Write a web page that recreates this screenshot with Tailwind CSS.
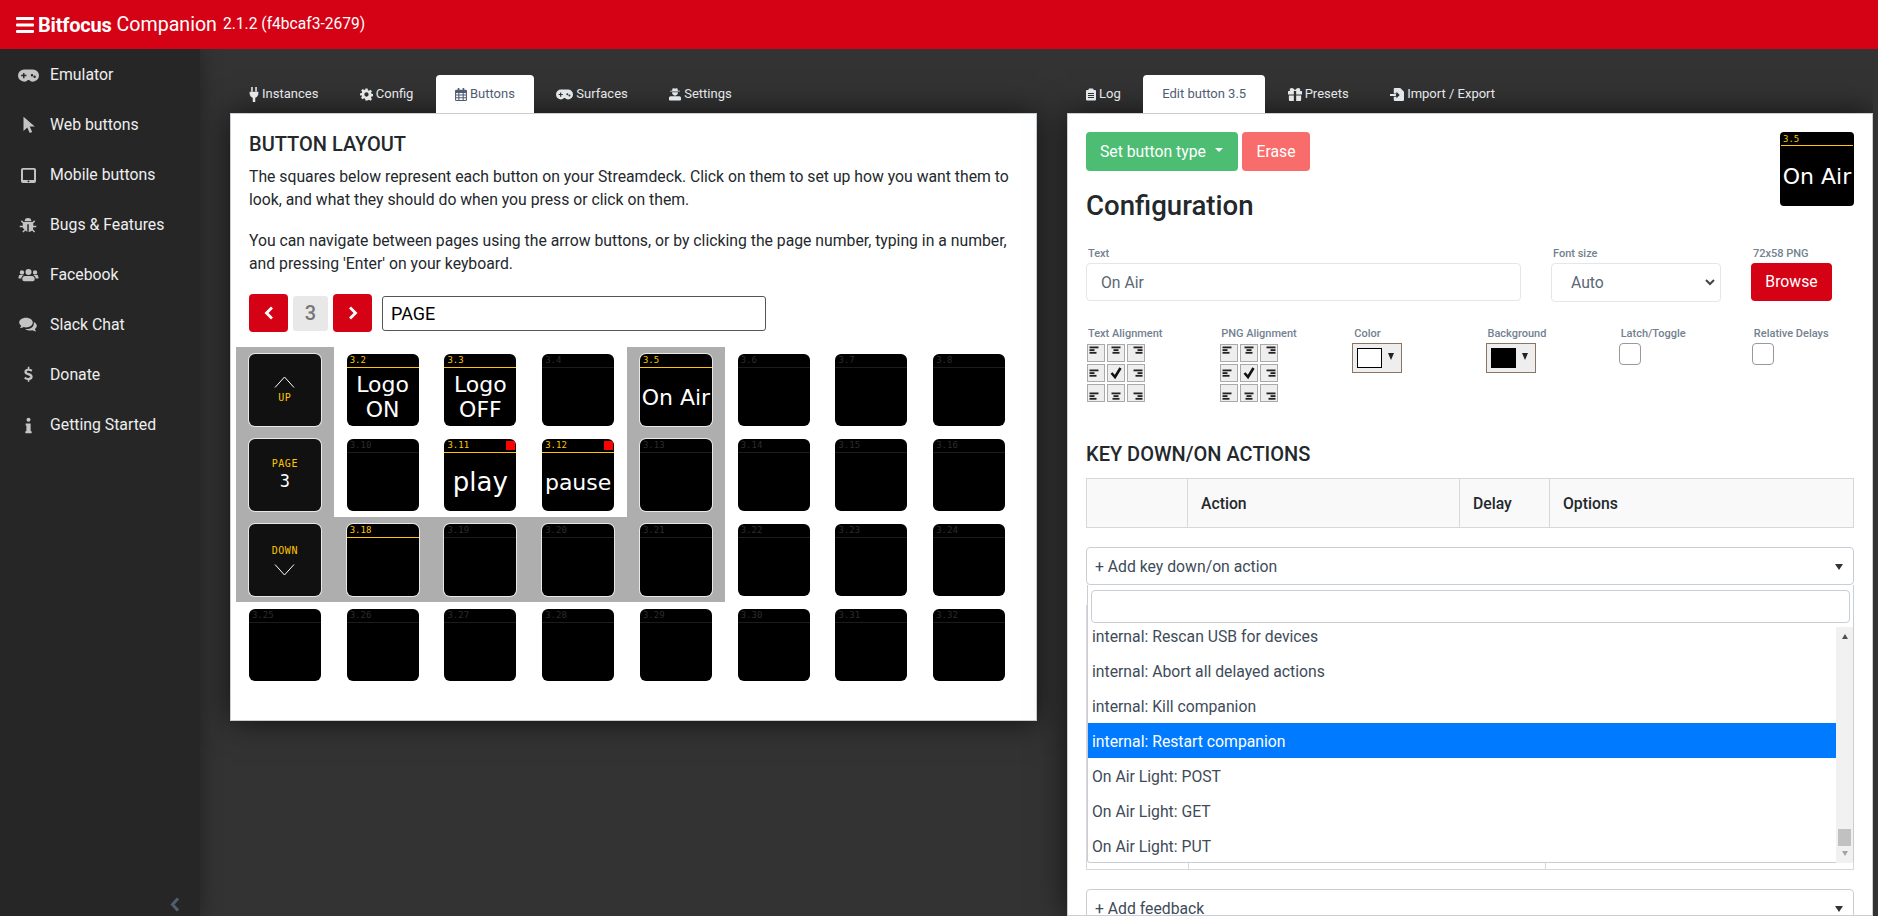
<!DOCTYPE html>
<html lang="en">

<head>
    <meta charset="UTF-8">
    <meta name="viewport" content="width=device-width, initial-scale=1.0">
    <title>Bitfocus Companion</title>
    <script src="https://cdn.jsdelivr.net/npm/@tailwindcss/browser@4"></script>
</head>

<body class="bg-[#333333] font-['Roboto',sans-serif] text-[#23282c] overflow-hidden">

    <!-- icon set -->
    <svg class="hidden">
        <symbol id="i-gamepad" viewBox="0 1 24 14"><path fill="currentColor" fill-rule="evenodd" d="M7 1h10a7 7 0 0 1 0 14c-2 0-3.2-1-4.2-2h-1.600c-1 1-2.200 2-4.200 2A7 7 0 0 1 7 1zM5.800 5v2.200H3.600v1.600h2.200V11h1.600V8.800h2.200V7.200H7.400V5zM16 6.200a1.400 1.400 0 1 0 0 2.800 1.400 1.400 0 0 0 0-2.800zM19 8a1.400 1.400 0 1 0 0 2.800A1.400 1.400 0 0 0 19 8z"/></symbol>
        <symbol id="i-pointer" viewBox="0 0 24 24"><path fill="currentColor" d="M6 1v19l5-4.600 3.300 7.400 3.300-1.500-3.300-7.200h6.700z"/></symbol>
        <symbol id="i-tablet" viewBox="2.5 1 19 22" preserveAspectRatio="none"><path fill="currentColor" fill-rule="evenodd" d="M5 1h14a2.500 2.500 0 0 1 2.500 2.500v17A2.500 2.500 0 0 1 19 23H5a2.500 2.500 0 0 1-2.500-2.500v-17A2.500 2.500 0 0 1 5 1zM5 3.500V18.500h14V3.500zM12 19.300a1.300 1.300 0 1 0 0 2.600 1.300 1.300 0 0 0 0-2.600z"/></symbol>
        <symbol id="i-bug" viewBox="0 0 24 24"><path fill="currentColor" fill-rule="evenodd" d="M7.500 7a4.500 4.500 0 0 1 9 0zM6 8h12l2.200-2.200 1.400 1.400L19 9.800V13h4v2h-4c0 1-.2 1.800-.5 2.500l3 3-1.400 1.400-2.700-2.700c-1 1.200-2.400 1.800-4.400 1.800s-3.400-.6-4.400-1.800l-2.700 2.700-1.400-1.400 3-3C5.200 16.800 5 16 5 15H1v-2h4V9.800L2.400 7.200l1.400-1.400zm5 3v9.800h2V11z"/></symbol>
        <symbol id="i-users" viewBox="0 0 24 18"><path fill="currentColor" d="M12 2a3.500 3.500 0 1 1 0 7 3.500 3.500 0 0 1 0-7zM4.500 3.500a2.500 2.500 0 1 1 0 5 2.500 2.500 0 0 1 0-5zM19.500 3.500a2.500 2.500 0 1 1 0 5 2.500 2.500 0 0 1 0-5zM8 10h8c1.600 0 3 1.200 3 3v1.500c0 1-1 1.500-2 1.500H7c-1 0-2-.5-2-1.500V13c0-1.800 1.400-3 3-3zM1 10c0-.6.600-1 1.200-1h3.300c.4 0 .6.200.8.400C5 10 3.800 11.400 3.800 13H1.500C1 13 .5 12.600.5 12zM23.500 12c0 .6-.5 1-1 1h-2.300c0-1.600-1.200-3-2.500-3.600.2-.2.400-.4.800-.4h3.300c.6 0 1.200.4 1.200 1z"/></symbol>
        <symbol id="i-comments" viewBox="0 0 24 20"><path fill="currentColor" d="M9.500 1C14.500 1 18 3.700 18 7s-3.500 6-8.500 6c-1 0-2-.1-2.900-.4C5.200 13.600 3.500 14 1.800 14c.8-.8 1.500-1.800 1.700-3C2 9.800 1 8.500 1 7c0-3.300 3.500-6 8.500-6z"/><path fill="currentColor" d="M19.300 6.200C21.600 7.300 23 9 23 11c0 1.500-.9 2.800-2.400 3.900.2 1.200.9 2.300 1.700 3.100-1.800 0-3.400-.5-4.900-1.400-.9.300-1.900.4-2.900.4-2.500 0-4.600-.7-6-1.900 6 .5 11.500-2.400 10.800-8.900z"/></symbol>
        <symbol id="i-info" viewBox="0 0 12 24"><path fill="currentColor" d="M6 1a2.800 2.800 0 1 1 0 5.600A2.800 2.800 0 0 1 6 1zM2 9h7v11h1.500v3h-9v-3H3v-8H2z"/></symbol>
        <symbol id="i-dollar" viewBox="0 0 14 24"><path fill="currentColor" d="M6 1h2.200v2.600c1.600.2 3 .8 4 1.500l-1.300 2.400c-1.200-.8-2.700-1.300-4-1.300-1.400 0-2.200.5-2.200 1.300 0 2.200 7.900 1.300 7.900 6.700 0 2.300-1.700 4-4.400 4.400V21H6v-2.400c-2-.2-3.600-1-4.800-2l1.400-2.300c1.300 1 2.800 1.700 4.300 1.700 1.500 0 2.500-.6 2.500-1.600 0-2.400-7.900-1.500-7.900-6.700 0-2.200 1.700-3.800 4.500-4.100z"/></symbol>
        <symbol id="i-plug" viewBox="0 0 16 24"><path fill="currentColor" d="M3.500 0h2.500v7H3.500zM10 0h2.500v7H10zM1 7.500h14v3c0 3.500-2.500 6-5 6.700V24H6v-6.800c-2.500-.7-5-3.200-5-6.700z"/></symbol>
        <symbol id="i-cog" viewBox="0 0 24 24"><path fill="currentColor" fill-rule="evenodd" d="M10 1h4l.6 3.200 2 .8 2.700-1.800 2.800 2.800-1.800 2.700.8 2 3.200.6v4l-3.200.6-.8 2 1.800 2.700-2.800 2.800-2.700-1.800-2 .8L14 23h-4l-.6-3.200-2-.8-2.700 1.800-2.800-2.800 1.800-2.700-.8-2L0 14v-4l3.200-.6.8-2-1.800-2.700 2.800-2.800 2.700 1.800 2-.8zM12 8a4 4 0 1 0 0 8 4 4 0 0 0 0-8z"/></symbol>
        <symbol id="i-calendar" viewBox="0 0 22 24"><path fill="currentColor" fill-rule="evenodd" d="M5 0h3v3h6V0h3v3h3a2 2 0 0 1 2 2v17a2 2 0 0 1-2 2H2a2 2 0 0 1-2-2V5a2 2 0 0 1 2-2h3zM2 9v3h4V9zm6 0v3h6V9zm8 0v3h4V9zM2 14v3h4v-3zm6 0v3h6v-3zm8 0v3h4v-3zM2 19v3h4v-3zm6 0v3h6v-3zm8 0v3h4v-3z"/></symbol>
        <symbol id="i-secret" viewBox="0 0 22 24"><path fill="currentColor" fill-rule="evenodd" d="M7 1c1.400.6 2.600 1 4 1s2.600-.4 4-1l1.500 5H20v1.500H2V6h3.500zM5.500 9h11c0 3-2 6-5.500 6S5.500 12 5.500 9zM3 16h16c1.700 0 3 1.300 3 3v3c0 1-1 2-2 2H2c-1 0-2-1-2-2v-3c0-1.700 1.300-3 3-3z"/></symbol>
        <symbol id="i-clipboard" viewBox="0 0 20 24"><path fill="currentColor" fill-rule="evenodd" d="M7 0h6a2 2 0 0 1 2 2v1h3a2 2 0 0 1 2 2v17a2 2 0 0 1-2 2H2a2 2 0 0 1-2-2V5a2 2 0 0 1 2-2h3V2a2 2 0 0 1 2-2zM4 9v1.800h12V9zm0 4v1.800h12V13zm0 4v1.800h12V17z"/></symbol>
        <symbol id="i-gift" viewBox="0 0 24 22"><path fill="currentColor" d="M6.500 0C8.500 0 11 2 12 4c1-2 3.500-4 5.500-4C20 0 21 1.500 21 3c0 .8-.2 1.400-.6 2H23a1 1 0 0 1 1 1v5H14V5h-4v6H0V6a1 1 0 0 1 1-1h2.600C3.200 4.400 3 3.800 3 3c0-1.500 1-3 3.500-3zM1.500 12.500H10V22H3a1.500 1.500 0 0 1-1.500-1.500zM14 12.500h8.500v8A1.500 1.500 0 0 1 21 22h-7z"/></symbol>
        <symbol id="i-import" viewBox="0 0 26 24"><path fill="currentColor" fill-rule="evenodd" d="M9 0h10l7 7v15a2 2 0 0 1-2 2H9a2 2 0 0 1-2-2v-6h5v3l6-6-6-6v3H7V2a2 2 0 0 1 2-2zM0 11h11v4H0z"/></symbol>
    </svg>

    <header class="flex items-center h-[49px] bg-[#d50215] text-white pl-[16px] relative z-20">
        <svg class="w-[18px] h-[16px] mr-[4px]" viewBox="0 0 18 16" fill="#fff"><rect y="0" width="18" height="3" rx="1"/><rect y="6.500" width="18" height="3" rx="1"/><rect y="13" width="18" height="3" rx="1"/></svg>
        <span class="text-[20px] font-bold tracking-[-0.2px]">Bitfocus</span>
        <span class="text-[19.6px] ml-[5px]">Companion</span>
        <span class="text-[15.6px] ml-[6px]">2.1.2 (f4bcaf3-2679)</span>
    </header>

    <div class="flex h-[867px]">
        <aside class="relative z-10 flex flex-col w-[200px] shrink-0 bg-[#262626] shadow-[0_0_20px_rgba(0,0,0,0.35)] pt-[1px] text-[15.8px] text-[#eeeeee]">
            <a class="flex items-center h-[50px]"><span class="flex justify-center w-[50px] pl-[6px] text-[#c4c4c4]"><svg class="w-[21px] h-[13px]"><use href="#i-gamepad"/></svg></span>Emulator</a>
            <a class="flex items-center h-[50px]"><span class="flex justify-center w-[50px] pl-[6px] text-[#c4c4c4]"><svg class="w-[18px] h-[18px]"><use href="#i-pointer"/></svg></span>Web buttons</a>
            <a class="flex items-center h-[50px]"><span class="flex justify-center w-[50px] pl-[6px] text-[#c4c4c4]"><svg class="w-[15px] h-[15px]"><use href="#i-tablet"/></svg></span>Mobile buttons</a>
            <a class="flex items-center h-[50px]"><span class="flex justify-center w-[50px] pl-[6px] text-[#c4c4c4]"><svg class="w-[18px] h-[18px]"><use href="#i-bug"/></svg></span>Bugs &amp; Features</a>
            <a class="flex items-center h-[50px]"><span class="flex justify-center w-[50px] pl-[6px] text-[#c4c4c4]"><svg class="w-[21px] h-[16px]"><use href="#i-users"/></svg></span>Facebook</a>
            <a class="flex items-center h-[50px]"><span class="flex justify-center w-[50px] pl-[6px] text-[#c4c4c4]"><svg class="w-[20px] h-[16px]"><use href="#i-comments"/></svg></span>Slack Chat</a>
            <a class="flex items-center h-[50px]"><span class="flex justify-center w-[50px] pl-[6px] text-[#c4c4c4]"><svg class="w-[11px] h-[18px]"><use href="#i-dollar"/></svg></span>Donate</a>
            <a class="flex items-center h-[50px]"><span class="flex justify-center w-[50px] pl-[6px] text-[#c4c4c4]"><svg class="w-[9px] h-[17px]"><use href="#i-info"/></svg></span>Getting Started</a>
            <div class="mt-auto flex justify-end pr-[20px] pb-[4px]">
                <svg class="w-[10px] h-[15px]" viewBox="0 0 10 15" fill="none" stroke="#4f5f70" stroke-width="3"><path d="M8 1.500 2.500 7.500 8 13.500"/></svg>
            </div>
        </aside>

        <main class="flex gap-[30px] pl-[30px] pt-[26px] overflow-hidden">

            <!-- left column -->
            <section class="w-[807px] shrink-0">
                <nav class="relative z-10 flex gap-[3.5px] h-[38px] text-[13px] text-[#e4e7ea]">
                    <a class="flex items-center px-[19px]"><svg class="w-[10px] h-[15px] mr-[3px]"><use href="#i-plug"/></svg>Instances</a>
                    <a class="flex items-center px-[19px]"><svg class="w-[13px] h-[13px] mr-[3px]"><use href="#i-cog"/></svg>Config</a>
                    <a class="flex items-center px-[19px] bg-white rounded-t-[4px] text-[#4f5d73]"><svg class="w-[12px] h-[13px] mr-[3px]"><use href="#i-calendar"/></svg>Buttons</a>
                    <a class="flex items-center px-[19px]"><svg class="w-[17px] h-[11px] mr-[3px]"><use href="#i-gamepad"/></svg>Surfaces</a>
                    <a class="flex items-center px-[19px]"><svg class="w-[12px] h-[14px] mr-[3px]"><use href="#i-secret"/></svg>Settings</a>
                </nav>
                <div class="h-[608px] bg-white border border-[#c8ced3] px-[18px] pt-[20px] shadow-[0_0_30px_rgba(0,0,0,0.65)]">
                    <h5 class="text-[20px] leading-[21px] font-medium">BUTTON LAYOUT</h5>
                    <p class="mt-[10px] text-[15.75px] leading-[23px]">The squares below represent each button on your Streamdeck. Click on them to set up how you want them to look, and what they should do when you press or click on them.</p>
                    <p class="mt-[18px] text-[15.75px] leading-[23px]">You can navigate between pages using the arrow buttons, or by clicking the page number, typing in a number, and pressing 'Enter' on your keyboard.</p>
                    <div class="flex items-center mt-[19px] h-[38px]">
                        <button class="flex items-center justify-center w-[39px] h-[38px] rounded-[4px] bg-[#d50215]"><svg class="w-[10px] h-[14px]" viewBox="0 0 10 14" fill="none" stroke="#fff" stroke-width="2.800"><path d="M8 1.500 2.500 7 8 12.500"/></svg></button>
                        <div class="flex items-center justify-center w-[35px] h-[35px] ml-[5px] rounded-[3px] bg-[#e8e8e8] text-[20px] font-medium text-[#777777]">3</div>
                        <button class="flex items-center justify-center w-[39px] h-[38px] ml-[5px] rounded-[4px] bg-[#d50215]"><svg class="w-[10px] h-[14px]" viewBox="0 0 10 14" fill="none" stroke="#fff" stroke-width="2.800"><path d="M2 1.500 7.500 7 2 12.500"/></svg></button>
                        <input class="w-[384px] h-[35px] ml-[10px] px-[8px] rounded-[3px] border border-[#555555] text-[18px] text-black" value="PAGE">
                    </div>
                    <div id="button-grid" class="grid grid-cols-8 w-[782px] mt-[15px] ml-[-13px]"></div>
                </div>
            </section>

            <!-- right column -->
            <section class="w-[806px] shrink-0">
                <nav class="relative z-10 flex gap-[3.5px] h-[38px] text-[13px] text-[#e4e7ea]">
                    <a class="flex items-center px-[19px]"><svg class="w-[10px] h-[13px] mr-[3px]"><use href="#i-clipboard"/></svg>Log</a>
                    <a class="flex items-center px-[19px] bg-white rounded-t-[4px] text-[#4f5d73]">Edit button 3.5</a>
                    <a class="flex items-center px-[19px]"><svg class="w-[14px] h-[13px] mr-[3px]"><use href="#i-gift"/></svg>Presets</a>
                    <a class="flex items-center px-[19px]"><svg class="w-[14px] h-[13px] mr-[3px]"><use href="#i-import"/></svg>Import / Export</a>
                </nav>
                <div class="h-[803px] bg-white border border-[#c8ced3] px-[18px] pt-[18px] shadow-[0_0_30px_rgba(0,0,0,0.65)]">
                    <div class="flex justify-between">
                        <div>
                            <div class="flex gap-[4px] text-[15.75px] text-white">
                                <button class="flex items-center h-[39px] w-[152px] pl-[14px] rounded-[4px] bg-[#4dbd74]">Set button type<span class="ml-[9px] mb-[3px] border-x-[4px] border-t-[4px] border-x-transparent border-t-white"></span></button>
                                <button class="h-[39px] w-[68px] rounded-[4px] bg-[#f86c6b]">Erase</button>
                            </div>
                            <h3 class="mt-[19px] mb-[-1px] text-[27.6px] leading-[32px] font-medium">Configuration</h3>
                        </div>
                        <div id="preview" class="flex flex-col w-[74px] h-[74px] rounded-[4px] bg-black text-white px-[1px] overflow-hidden">
                            <div class="h-[14px] pt-[1px] pl-[2px] border-b border-[#ffc600] font-['DejaVu_Sans_Mono',monospace] text-[9px] leading-[12px] text-[#ffc600]">3.5</div>
                            <div class="flex-1 flex items-center justify-center font-['DejaVu_Sans',sans-serif] text-[22px]">On Air</div>
                        </div>
                    </div>

                    <div class="flex gap-[30px] mt-[25px]">
                        <div class="w-[435px]">
                            <label class="block pt-[1px] pl-[2px] mb-[2px] text-[11px] leading-[14px] font-medium text-[#73818f]">Text</label>
                            <input class="w-full h-[38px] px-[14px] rounded-[4px] border border-[#e4e7ea] text-[15.75px] text-[#5c6873]" value="On Air">
                        </div>
                        <div class="w-[170px]">
                            <label class="block pt-[1px] pl-[2px] mb-[2px] text-[11px] leading-[14px] font-medium text-[#73818f]">Font size</label>
                            <div class="flex items-center justify-between w-full h-[39px] pl-[19px] pr-[5px] rounded-[4px] border border-[#e4e7ea] text-[15.75px] text-[#5c6873]">Auto<svg class="w-[10px] h-[7px]" viewBox="0 0 10 7" fill="none" stroke="#444" stroke-width="2"><path d="M1 1l4 4 4-4"/></svg></div>
                        </div>
                        <div class="w-[81px]">
                            <label class="block pt-[1px] pl-[2px] mb-[2px] text-[11px] leading-[14px] font-medium text-[#73818f] whitespace-nowrap">72x58 PNG</label>
                            <button class="w-full h-[38px] rounded-[4px] bg-[#d50215] text-[15.75px] text-white">Browse</button>
                        </div>
                    </div>

                    <div class="grid grid-cols-6 w-[799px] mt-[24px] text-[11px] leading-[14px] font-medium text-[#73818f]">
                        <div>
                            <div class="pt-[1px] pl-[2px]">Text Alignment</div>
                            <div class="align-grid grid grid-cols-[18px_18px_18px] gap-[2px] mt-[3px] ml-[1px]"></div>
                        </div>
                        <div>
                            <div class="pt-[1px] pl-[2px]">PNG Alignment</div>
                            <div class="align-grid grid grid-cols-[18px_18px_18px] gap-[2px] mt-[3px] ml-[1px]"></div>
                        </div>
                        <div>
                            <div class="pt-[1px] pl-[2px]">Color</div>
                            <div class="flex items-start w-[50px] h-[30px] mt-[2px] pt-[4px] pl-[4px] border border-[#8b7560] bg-[#eeeeee]">
                                <span class="w-[25px] h-[20px] bg-white border border-black"></span>
                                <span class="ml-[6px] mt-[5px] border-x-[3.5px] border-t-[7px] border-x-transparent border-t-[#222222]"></span>
                            </div>
                        </div>
                        <div>
                            <div class="pt-[1px] pl-[2px]">Background</div>
                            <div class="flex items-start w-[50px] h-[30px] mt-[2px] pt-[4px] pl-[4px] border border-[#8b7560] bg-[#eeeeee]">
                                <span class="w-[25px] h-[20px] bg-black border border-black"></span>
                                <span class="ml-[6px] mt-[5px] border-x-[3.5px] border-t-[7px] border-x-transparent border-t-[#222222]"></span>
                            </div>
                        </div>
                        <div>
                            <div class="pt-[1px] pl-[2px]">Latch/Toggle</div>
                            <div class="w-[22px] h-[22px] mt-[2px] rounded-[4px] border border-[#999999] bg-white"></div>
                        </div>
                        <div>
                            <div class="pt-[1px] pl-[2px]">Relative Delays</div>
                            <div class="w-[22px] h-[22px] mt-[2px] rounded-[4px] border border-[#999999] bg-white"></div>
                        </div>
                    </div>

                    <h5 class="h-[21px] mt-[42px] text-[20px] leading-[21px] font-medium">KEY DOWN/ON ACTIONS</h5>
                    <div class="flex h-[50px] mt-[13px] border border-[#d5d9dc] bg-[#f9f9f9] text-[15.75px] font-medium leading-[50px]">
                        <div class="w-[100px]"></div>
                        <div class="w-[272px] pl-[13px] border-l border-[#d5d9dc]">Action</div>
                        <div class="w-[90px] pl-[13px] border-l border-[#d5d9dc]">Delay</div>
                        <div class="flex-1 pl-[13px] border-l border-[#d5d9dc]">Options</div>
                    </div>

                    <div class="relative mt-[19px] z-10">
                        <div class="flex items-center justify-between h-[38px] pl-[8px] pr-[10px] pt-[1px] rounded-[4px] border border-[#c8ced3] bg-white text-[15.75px] text-[#3e4b59]">+ Add key down/on action<span class="border-x-[4px] border-t-[6px] border-x-transparent border-t-[#333333]"></span></div>
                        <div class="absolute top-[38px] left-[1px] right-0 h-[278px] bg-white border-x border-b border-[#c8ced3] rounded-b-[3px]">
                            <div class="h-[33px] mx-[3px] mt-[5px] rounded-[4px] border border-[#c8ced3]"></div>
                            <div class="flex h-[236px] mt-[4px] overflow-hidden text-[15.75px] text-[#3e4b59]">
                                <ul class="flex-1 -mt-[9px]">
                                    <li class="h-[35px] pl-[4px] leading-[37px]">internal: Rescan USB for devices</li>
                                    <li class="h-[35px] pl-[4px] leading-[37px]">internal: Abort all delayed actions</li>
                                    <li class="h-[35px] pl-[4px] leading-[37px]">internal: Kill companion</li>
                                    <li class="h-[35px] pl-[4px] leading-[37px] bg-[#007bff] text-white">internal: Restart companion</li>
                                    <li class="h-[35px] pl-[4px] leading-[37px]">On Air Light: POST</li>
                                    <li class="h-[35px] pl-[4px] leading-[37px]">On Air Light: GET</li>
                                    <li class="h-[35px] pl-[4px] leading-[37px]">On Air Light: PUT</li>
                                </ul>
                                <div class="flex flex-col items-center w-[17px] bg-[#f1f1f1]">
                                    <span class="mt-[7px] border-x-[3.5px] border-b-[5px] border-x-transparent border-b-[#505050]"></span>
                                    <span class="w-[13px] h-[17px] mt-[190px] bg-[#c1c1c1]"></span>
                                    <span class="mt-[5px] border-x-[3.5px] border-t-[5px] border-x-transparent border-t-[#a3a3a3]"></span>
                                </div>
                            </div>
                        </div>
                    </div>

                    <!-- release actions table, mostly under the open dropdown -->
                    <div class="flex h-[265px] mt-[20px] border border-[#d5d9dc]">
                        <div class="w-[101px]"></div>
                        <div class="w-[357px] border-l border-[#d5d9dc]"></div>
                        <div class="flex-1 border-l border-[#d5d9dc]"></div>
                    </div>

                    <div class="flex items-center justify-between h-[38px] mt-[19px] pl-[8px] pr-[10px] pt-[1px] rounded-[4px] border border-[#c8ced3] text-[15.75px] text-[#3e4b59]">+ Add feedback<span class="border-x-[4px] border-t-[6px] border-x-transparent border-t-[#333333]"></span></div>
                </div>
            </section>
        </main>
    </div>

    <script>
        // page 3 of the button bank
        const buttons = {
            2: { lines: ['Logo', 'ON'], on: true },
            3: { lines: ['Logo', 'OFF'], on: true },
            5: { lines: ['On Air'], on: true },
            11: { lines: ['play'], on: true, big: true, red: true },
            12: { lines: ['pause'], on: true, red: true },
            18: { lines: [], on: true },
        }
        const chevUp = '<svg class="w-[21px] h-[12px]" viewBox="0 0 21 12" fill="none" stroke="#fff" stroke-width="1"><path d="M1 11.500 10.500 1 20 11.500"/></svg>'
        const chevDown = '<svg class="w-[21px] h-[12px]" viewBox="0 0 21 12" fill="none" stroke="#fff" stroke-width="1"><path d="M1 .5 10.500 11 20 .5"/></svg>'
        const navLabel = "font-['DejaVu_Sans_Mono',monospace] text-[10px] leading-[10px] tracking-[0.6px] text-[#ffc600]"

        const navCell = {
            1: `${chevUp}<span class="mt-[5px] ${navLabel}">UP</span>`,
            9: `<span class="${navLabel}">PAGE</span><span class="mt-[3px] font-['DejaVu_Sans_Mono',monospace] text-[17px] leading-[18px] text-white">3</span>`,
            17: `<span class="mt-[3px] ${navLabel}">DOWN</span><span class="mt-[8px] flex">${chevDown}</span>`,
        }

        function isGray(n) {
            const col = (n - 1) % 8, row = Math.floor((n - 1) / 8)
            return row < 3 && (col === 0 || col === 4 || (row === 2 && col <= 4))
        }

        const grid = document.getElementById('button-grid')
        let html = ''
        for (let n = 1; n <= 32; n++) {
            const gray = isGray(n)
            let inner
            if (navCell[n]) {
                inner = `<div class="flex flex-col items-center justify-center w-[72px] h-[72px] rounded-[6px] bg-[#111111] ring-1 ring-[#e8e8e8]">${navCell[n]}</div>`
            } else {
                const b = buttons[n] || { lines: [] }
                const head = b.on
                    ? 'border-[#ffc600] text-[#ffc600]'
                    : 'border-[#1c1c1c] text-[#2c2c2c]'
                const size = b.big ? 'text-[26px]' : 'text-[22px]'
                inner = `<div class="relative flex flex-col w-[72px] h-[72px] rounded-[6px] bg-black text-white overflow-hidden ${gray ? 'ring-1 ring-[#e8e8e8]' : ''}">
                    <div class="h-[14px] pl-[3px] border-b ${head} font-['DejaVu_Sans_Mono',monospace] text-[9px] leading-[13px]">3.${n}</div>
                    ${b.red ? '<span class="absolute top-[2px] right-[1px] w-[9px] h-[9px] bg-[#ff0000]"></span>' : ''}
                    <div class="flex-1 flex flex-col items-center justify-center pt-[1px] font-['DejaVu_Sans',sans-serif] ${size} leading-[25px] whitespace-nowrap">${b.lines.map(l => `<span>${l}</span>`).join('')}</div>
                </div>`
            }
            html += `<div class="flex items-center justify-center h-[85px] ${gray ? 'bg-[#aeaeae]' : ''}">${inner}</div>`
        }
        grid.innerHTML = html

        // 3x3 alignment pickers
        document.querySelectorAll('.align-grid').forEach(el => {
            let cells = ''
            for (let r = 0; r < 3; r++) {
                for (let c = 0; c < 3; c++) {
                    const y = [1.5, 4.5, 7.5][r]
                    const x = w => [1.5, (16 - w) / 2, 14.5 - w][c]
                    const bars = [9, 5, 7].map((w, i) => `<rect x="${x(w)}" y="${y + i * 2.7}" width="${w}" height="1.8"/>`).join('')
                    const check = '<path d="M3.500 8 7 12 12.500 3" fill="none" stroke="#111" stroke-width="2.600"/>'
                    cells += `<div class="w-[18px] h-[18px] bg-[#eeeeee] border border-[#aaaaaa]"><svg class="w-[16px] h-[16px]" viewBox="0 0 16 16" fill="#222">${r === 1 && c === 1 ? check : bars}</svg></div>`
                }
            }
            el.innerHTML = cells
        })
    </script>
</body>

</html>
